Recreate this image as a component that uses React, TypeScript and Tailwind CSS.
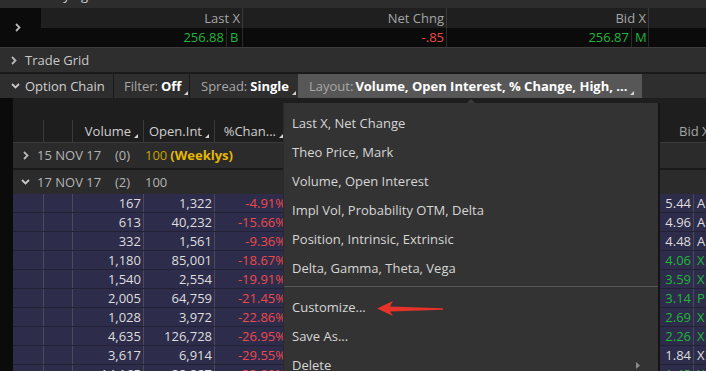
import React from 'react';

interface ChainRow {
  vol: string;
  oi: string;
  chg: string;
  bid: string;
  ex: string;
  bidUp: boolean;
}

const ROWS: ChainRow[] = [
  { vol: '167', oi: '1,322', chg: '-4.91%', bid: '5.44', ex: 'A', bidUp: false },
  { vol: '613', oi: '40,232', chg: '-15.66%', bid: '4.96', ex: 'A', bidUp: false },
  { vol: '332', oi: '1,561', chg: '-9.36%', bid: '4.48', ex: 'A', bidUp: false },
  { vol: '1,180', oi: '85,001', chg: '-18.67%', bid: '4.06', ex: 'X', bidUp: true },
  { vol: '1,540', oi: '2,554', chg: '-19.91%', bid: '3.59', ex: 'X', bidUp: true },
  { vol: '2,005', oi: '64,759', chg: '-21.45%', bid: '3.14', ex: 'P', bidUp: true },
  { vol: '1,028', oi: '3,972', chg: '-22.86%', bid: '2.69', ex: 'X', bidUp: true },
  { vol: '4,635', oi: '126,728', chg: '-26.95%', bid: '2.26', ex: 'X', bidUp: true },
  { vol: '3,617', oi: '6,914', chg: '-29.55%', bid: '1.84', ex: 'X', bidUp: false },
  { vol: '14,165', oi: '22,887', chg: '-33.80%', bid: '1.45', ex: 'X', bidUp: true },
];

const LAYOUTS = [
  'Last X, Net Change',
  'Theo Price, Mark',
  'Volume, Open Interest',
  'Impl Vol, Probability OTM, Delta',
  'Position, Intrinsic, Extrinsic',
  'Delta, Gamma, Theta, Vega',
];

const ChevronRight = () => (
  <svg width="6" height="9" viewBox="0 0 6 9" className="shrink-0">
    <path d="M1 1l3.5 3.5L1 8" fill="none" stroke="#b8b8b8" strokeWidth="1.8" />
  </svg>
);

const ChevronDown = () => (
  <svg width="9" height="6" viewBox="0 0 9 6" className="shrink-0">
    <path d="M1 1l3.5 3.5L8 1" fill="none" stroke="#c8c8c8" strokeWidth="1.8" />
  </svg>
);

// little sort/menu marker in the bottom-right corner of a label
const Corner = ({ mb = 'mb-[4px]' }: { mb?: string }) => (
  <svg width="4" height="4" viewBox="0 0 4 4" className={`self-end ml-[3px] shrink-0 ${mb}`}>
    <polygon points="4,0 4,4 0,4" fill="#d4d4d4" />
  </svg>
);

const App: React.FC = () => {
  return (
    <div className="w-[706px] h-[371px] overflow-hidden relative bg-[#1e1e1e] font-['Open_Sans',sans-serif] text-[13px] leading-none text-[#cfcfcf] select-none">
      {/* Underlying strip (cut off at top) */}
      <div className="h-[8px] bg-[#2d2d2d] overflow-hidden">
        <div className="pl-[22px] -mt-[13px] leading-[16px] text-[#cfcfcf]">Underlying</div>
      </div>

      {/* Quote header */}
      <div className="flex">
        <div className="w-[41px] bg-[#0b0b0b] flex items-center pl-[15px]">
          <ChevronRight />
        </div>
        <div className="flex-1 flex flex-col">
          <div className="h-[20px] bg-[#1f1f1f] flex text-[#a5a5a5] whitespace-nowrap">
            <div className="w-[202px] border-r border-[#3a3a3a] flex items-center justify-end pr-[2px]">Last X</div>
            <div className="w-[204px] border-r border-[#3a3a3a] flex items-center justify-end pr-[2px]">Net Chng</div>
            <div className="w-[202px] border-r border-[#3a3a3a] flex items-center justify-end pr-[2px]">Bid X</div>
          </div>
          <div className="h-[19px] bg-[#0b0b0b] flex whitespace-nowrap">
            <div className="w-[186px] border-r border-[#2a2a2a] flex items-center justify-end pr-[2px] text-[#22b43c]">256.88</div>
            <div className="w-[16px] border-r border-[#2a2a2a] flex items-center pl-[3px] text-[#22b43c]">B</div>
            <div className="w-[204px] border-r border-[#2a2a2a] flex items-center justify-end pr-[2px] text-[#ea4b4b]">-.85</div>
            <div className="w-[185px] border-r border-[#2a2a2a] flex items-center justify-end pr-[2px] text-[#22b43c]">256.87</div>
            <div className="w-[17px] border-r border-[#2a2a2a] flex items-center pl-[3px] text-[#22b43c]">M</div>
          </div>
        </div>
      </div>

      {/* Trade Grid */}
      <div className="h-[25px] border-t border-[#3d3d3d] bg-[#2e2e2e] flex items-center pl-[11px] gap-[8px]">
        <ChevronRight />
        <span className="text-[#c8c8c8]">Trade Grid</span>
      </div>
      <div className="h-[2px] bg-[#1a1a1a]" />

      {/* Option Chain toolbar */}
      <div className="h-[24px] bg-[#2e2e2e] flex whitespace-nowrap">
        <div className="w-[114px] border-r border-[#1a1a1a] flex items-center pl-[11px] gap-[5px]">
          <ChevronDown />
          <span className="text-[#d0d0d0]">Option Chain</span>
        </div>
        <div className="w-[76px] border-r border-[#1a1a1a] flex items-center pl-[10px]">
          <span className="text-[#a8a8a8]">Filter:</span>
          <span className="ml-[3px] font-bold text-white">Off</span>
          <Corner mb="mb-[3px]" />
        </div>
        <div className="w-[108px] flex items-center pl-[11px]">
          <span className="text-[#a8a8a8]">Spread:</span>
          <span className="ml-[3px] font-bold text-white">Single</span>
          <Corner mb="mb-[3px]" />
        </div>
        <div className="w-[344px] bg-[#575757] flex items-center pl-[11px]">
          <span className="text-[#a8a8a8]">Layout:</span>
          <span className="ml-[2px] font-bold text-white">Volume, Open Interest, % Change, High, ...</span>
          <Corner mb="mb-[3px]" />
        </div>
      </div>

      {/* Chain table */}
      <div className="flex">
        <div className="w-[13px] bg-[#0b0b0b] shrink-0" />
        <div className="flex-1 flex flex-col">
          <div className="h-[22px]" />

          {/* column headers */}
          <div className="h-[23px] border-b border-[#3a3a3a] flex whitespace-nowrap text-[#cfcfcf]">
            <div className="w-[31px] border-r border-[#3a3a3a]" />
            <div className="w-[29px] border-r border-[#3a3a3a]" />
            <div className="w-[71px] border-r border-[#3a3a3a] flex items-center justify-end pr-[5px]">
              Volume<Corner />
            </div>
            <div className="w-[71px] border-r border-[#3a3a3a] flex items-center justify-end pr-[5px]">
              Open.Int<Corner />
            </div>
            <div className="w-[74px] border-r border-[#3a3a3a] flex items-center justify-end pr-[5px]">
              %Chan...<Corner />
            </div>
            <div className="w-[369px] border-r border-[#3a3a3a]" />
            <div className="flex-1 flex items-center pl-[21px] overflow-hidden text-[#a5a5a5]">Bid X</div>
          </div>

          {/* expirations */}
          <div className="h-[25px] bg-[#2b2b2b] flex items-center whitespace-nowrap">
            <div className="w-[24px] pl-[10px] flex"><ChevronRight /></div>
            <span className="w-[78px] text-[#b4b4b4]">15 NOV 17</span>
            <span className="w-[30px] text-[#b4b4b4]">(0)</span>
            <span className="text-[#c9a300]">100</span>
            <span className="ml-[3px] font-bold text-[#e6b800]">(Weeklys)</span>
          </div>
          <div className="h-[2px] bg-[#1a1a1a]" />
          <div className="h-[24px] bg-[#2b2b2b] flex items-center whitespace-nowrap">
            <div className="w-[24px] pl-[8px] flex"><ChevronDown /></div>
            <span className="w-[78px] text-[#b4b4b4]">17 NOV 17</span>
            <span className="w-[30px] text-[#b4b4b4]">(2)</span>
            <span className="text-[#b4b4b4]">100</span>
          </div>

          {/* strikes */}
          {ROWS.map((r) => (
            <div key={r.vol} className="h-[19px] border-b border-[#222136] bg-[#2d2c4a] flex whitespace-nowrap">
              <div className="w-[31px] border-r border-[#4a4a5c]" />
              <div className="w-[29px] border-r border-[#4a4a5c]" />
              <div className="w-[71px] border-r border-[#4a4a5c] flex items-center justify-end pr-[2px] text-[#dedede]">{r.vol}</div>
              <div className="w-[71px] border-r border-[#4a4a5c] flex items-center justify-end pr-[2px] text-[#dedede]">{r.oi}</div>
              <div className="w-[74px] border-r border-[#4a4a5c] flex items-center justify-end pr-[2px] text-[#ee4a4a]">{r.chg}</div>
              <div className="w-[369px] border-r border-[#4a4a5c]" />
              <div className={`w-[36px] border-r border-[#4a4a5c] flex items-center justify-end pr-[2px] ${r.bidUp ? 'text-[#22b43c]' : 'text-[#dedede]'}`}>{r.bid}</div>
              <div className={`flex-1 flex items-center pl-[3px] ${r.bidUp ? 'text-[#22b43c]' : 'text-[#dedede]'}`}>{r.ex}</div>
            </div>
          ))}
        </div>
      </div>

      {/* Layout dropdown menu */}
      <svg width="10" height="6" viewBox="0 0 10 6" className="absolute left-[466px] top-[98px]">
        <polygon points="0,6 5,1 10,6" fill="#3a3a3a" />
      </svg>
      <div className="absolute left-[283px] top-[103px] w-[377px] h-[280px] bg-[#333333] border-l border-[#2a2a2a] border-r-2 border-r-[#141414] pt-[6px] text-[#d6d6d6] whitespace-nowrap">
        {LAYOUTS.map((l) => (
          <div key={l} className="h-[29px] flex items-center pl-[8px]">{l}</div>
        ))}
        <div className="mt-[3px] mb-[6px] h-px bg-[#555555]" />
        <div className="h-[29px] flex items-center pl-[8px]">Customize...</div>
        <div className="h-[29px] flex items-center pl-[8px]">Save As...</div>
        <div className="h-[29px] flex items-center pl-[8px] justify-between pr-[18px]">
          <span>Delete</span>
          <svg width="4" height="7" viewBox="0 0 4 7"><polygon points="0,0 4,3.5 0,7" fill="#8a8a8a" /></svg>
        </div>
      </div>

      {/* red annotation arrow */}
      <svg width="70" height="18" viewBox="0 0 70 18" className="absolute left-[375px] top-[300px]">
        <polygon points="2,8.5 18,1 15,6.5 68,8.3 68,9.7 15,11.5 18,16" fill="#e5332b" />
      </svg>
    </div>
  );
};

export default App;
